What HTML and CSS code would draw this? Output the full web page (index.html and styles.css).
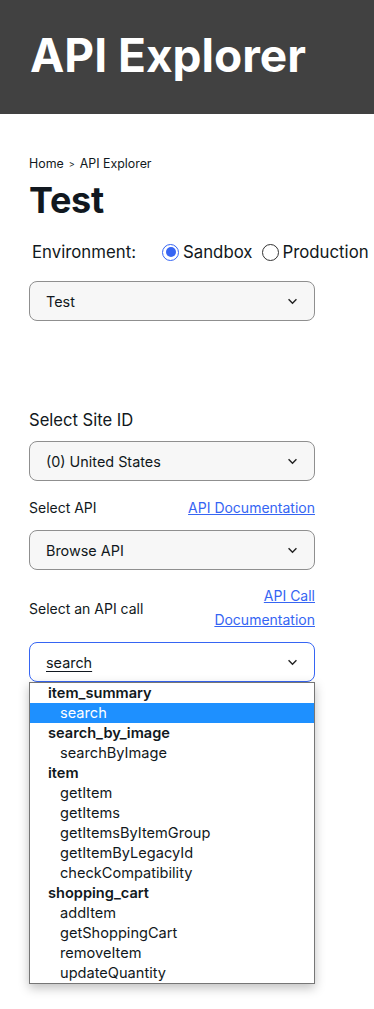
FILE: index.html
```html
<!DOCTYPE html>
<html lang="en">
<head>
<meta charset="utf-8">
<title>API Explorer</title>
<link rel="stylesheet" href="styles.css">
</head>
<body>
<header class="banner">
  <h1 class="banner-title">API Explorer</h1>
</header>
<main class="content">
  <nav class="crumbs"><span>Home</span><span class="crumb-sep">&gt;</span><span>API Explorer</span></nav>
  <h2 class="page-title">Test</h2>
  <div class="env-row">
    <span class="env-label">Environment:</span>
    <label class="radio first"><span class="radio-dot checked"></span>Sandbox</label>
    <label class="radio"><span class="radio-dot"></span>Production</label>
  </div>
  <div class="select"><span class="select-text">Test</span><svg class="chev" viewBox="0 0 12 8" width="11" height="7"><path d="M1.5 1.5 L6 6 L10.5 1.5" fill="none" stroke="#222" stroke-width="1.6"/></svg></div>

  <div class="field-label site-label">Select Site ID</div>
  <div class="select"><span class="select-text">(0) United States</span><svg class="chev" viewBox="0 0 12 8" width="11" height="7"><path d="M1.5 1.5 L6 6 L10.5 1.5" fill="none" stroke="#222" stroke-width="1.6"/></svg></div>

  <div class="label-row api-row">
    <span class="small-label">Select API</span>
    <a class="doc-link" href="#">API Documentation</a>
  </div>
  <div class="select"><span class="select-text">Browse API</span><svg class="chev" viewBox="0 0 12 8" width="11" height="7"><path d="M1.5 1.5 L6 6 L10.5 1.5" fill="none" stroke="#222" stroke-width="1.6"/></svg></div>

  <div class="label-row call-row">
    <span class="small-label">Select an API call</span>
    <a class="doc-link call-link" href="#">API Call<br>Documentation</a>
  </div>
  <div class="call-wrap">
    <div class="select focused"><span class="select-text underline">search</span><svg class="chev" viewBox="0 0 12 8" width="11" height="7"><path d="M1.5 1.5 L6 6 L10.5 1.5" fill="none" stroke="#222" stroke-width="1.6"/></svg></div>
    <ul class="listbox">
      <li class="group">item_summary</li>
      <li class="opt selected">search</li>
      <li class="group">search_by_image</li>
      <li class="opt">searchByImage</li>
      <li class="group">item</li>
      <li class="opt">getItem</li>
      <li class="opt">getItems</li>
      <li class="opt">getItemsByItemGroup</li>
      <li class="opt">getItemByLegacyId</li>
      <li class="opt">checkCompatibility</li>
      <li class="group">shopping_cart</li>
      <li class="opt">addItem</li>
      <li class="opt">getShoppingCart</li>
      <li class="opt">removeItem</li>
      <li class="opt">updateQuantity</li>
    </ul>
  </div>
</main>
</body>
</html>
```
FILE: styles.css
```css
* { box-sizing: border-box; }
html, body { margin: 0; padding: 0; background: #fff; }
body { font-family: Inter, "Open Sans", Arial, sans-serif; color: #111820; height: 1009px; overflow: hidden; }

.banner { background: #414141; height: 114px; padding: 28px 0 0 30px; }
.banner-title { margin: 0; color: #fff; font-size: 46px; font-weight: 700; line-height: 54px; letter-spacing: 0; }

.content { padding: 42px 0 0 29px; width: 345px; }

.crumbs { font-size: 12.4px; line-height: 16px; display: flex; gap: 5px; color: #111820; }
.crumb-sep { font-size: 9px; }

.page-title { margin: 6px 0 0; font-size: 36px; font-weight: 700; line-height: 44px; letter-spacing: -0.3px; }

.env-row { display: flex; align-items: center; margin-top: 18px; font-size: 16.8px; line-height: 24px; padding-left: 3px; white-space: nowrap; }
.env-label { flex: none; width: 130px; }
.radio { flex: none; display: flex; align-items: center; gap: 4px; }
.radio.first { margin-right: 9px; }
.radio-dot { flex: none; width: 17px; height: 17px; border-radius: 50%; border: 1px solid #333; display: inline-block; position: relative; }
.radio-dot.checked { border-color: #3665f3; }
.radio-dot.checked::after { content: ""; position: absolute; left: 2.5px; top: 2.5px; width: 10px; height: 10px; border-radius: 50%; background: #3665f3; }

.select { width: 286px; height: 40px; border: 1px solid #8f8f8f; border-radius: 8px; background: #f7f7f7; display: flex; align-items: center; justify-content: space-between; padding: 0 16px 0 16px; font-size: 14.4px; }
.env-row + .select { margin-top: 17px; }
.select.focused { border-color: #3665f3; background: #fff; }
.select-text.underline { text-decoration: underline; text-underline-offset: 3px; }

.field-label { font-size: 16.6px; line-height: 24px; }
.site-label { margin-top: 87px; margin-bottom: 9px; }

.label-row { width: 286px; display: flex; justify-content: space-between; align-items: center; }
.api-row { margin: 17px 0 12px; line-height: 20px; }
.small-label { font-size: 14px; }
.doc-link { color: #3665f3; font-size: 14px; text-decoration: underline; text-align: right; }
.call-row { margin: 14px 0 10px; }
.call-link { line-height: 24px; }

.call-wrap { position: relative; }
.listbox { position: absolute; left: 0; top: 40px; width: 286px; margin: 0; padding: 0; list-style: none; border: 1px solid #767676; background: #fff; box-shadow: 0 4px 10px rgba(0,0,0,0.25); font-size: 14.6px; }
.listbox li { height: 20px; line-height: 20px; }
.group { font-weight: 600; padding-left: 18px; }
.opt { padding-left: 30px; }
.opt.selected { background: #1e90ff; color: #fff; }
```
